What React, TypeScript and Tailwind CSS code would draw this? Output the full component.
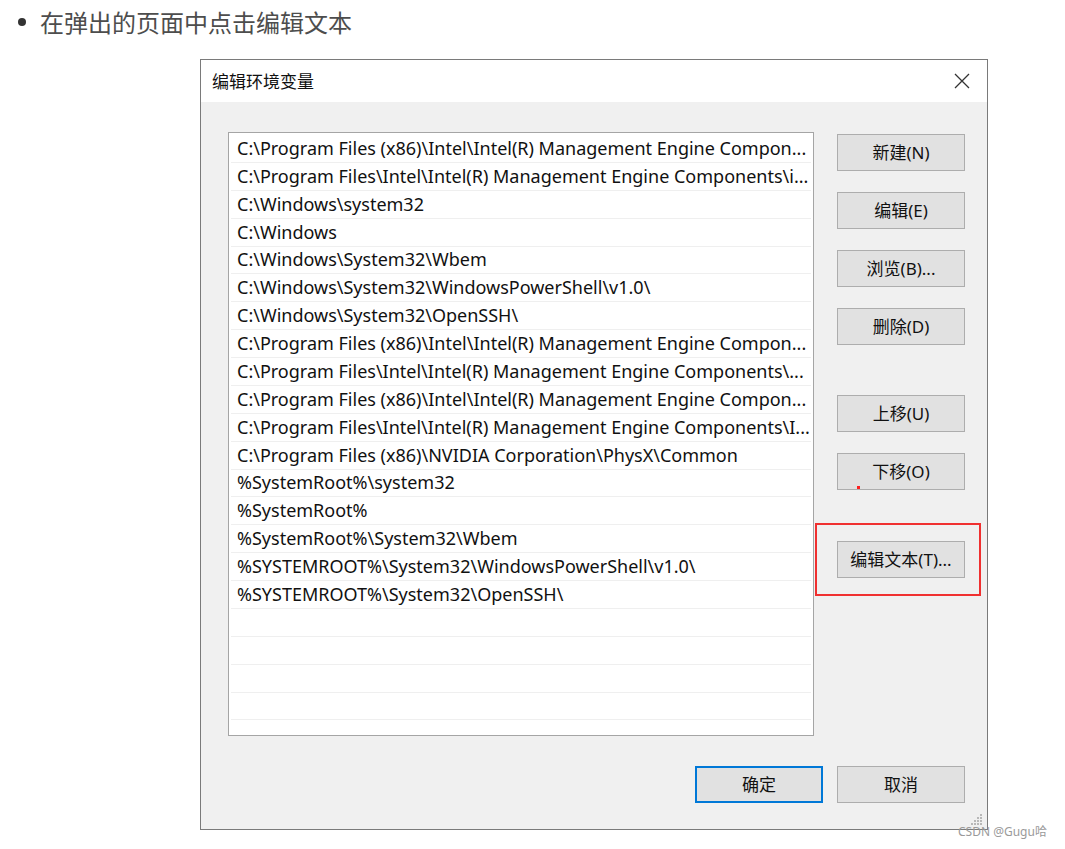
import React from "react";

const rows = [
  "C:\\Program Files (x86)\\Intel\\Intel(R) Management Engine Compon...",
  "C:\\Program Files\\Intel\\Intel(R) Management Engine Components\\i...",
  "C:\\Windows\\system32",
  "C:\\Windows",
  "C:\\Windows\\System32\\Wbem",
  "C:\\Windows\\System32\\WindowsPowerShell\\v1.0\\",
  "C:\\Windows\\System32\\OpenSSH\\",
  "C:\\Program Files (x86)\\Intel\\Intel(R) Management Engine Compon...",
  "C:\\Program Files\\Intel\\Intel(R) Management Engine Components\\...",
  "C:\\Program Files (x86)\\Intel\\Intel(R) Management Engine Compon...",
  "C:\\Program Files\\Intel\\Intel(R) Management Engine Components\\I...",
  "C:\\Program Files (x86)\\NVIDIA Corporation\\PhysX\\Common",
  "%SystemRoot%\\system32",
  "%SystemRoot%",
  "%SystemRoot%\\System32\\Wbem",
  "%SYSTEMROOT%\\System32\\WindowsPowerShell\\v1.0\\",
  "%SYSTEMROOT%\\System32\\OpenSSH\\",
  "",
  "",
  "",
  "",
  "",
  "",
];

function Btn({ label, primary }: { label: string; primary?: boolean }) {
  return (
    <div
      className={
        "w-[128px] h-[37px] flex items-center justify-center bg-[#e1e1e1] text-[17px] text-[#111] " +
        (primary ? "border-2 border-[#0078d7]" : "border border-[#adadad]")
      }
    >
      {label}
    </div>
  );
}

export default function App() {
  return (
    <div className="relative w-[1065px] h-[849px] bg-white overflow-hidden font-['Noto_Sans','Noto_Sans_CJK_SC',sans-serif]">
      {/* bullet line */}
      <div className="flex items-center h-[44px] pl-[18px]">
        <div className="w-[8px] h-[8px] rounded-full bg-[#333]" />
        <div className="ml-[14px] text-[24px] leading-[30px] text-[#4d4d4d] font-['Noto_Sans_CJK_SC',sans-serif]">
          在弹出的页面中点击编辑文本
        </div>
      </div>

      {/* dialog */}
      <div className="relative mt-[15px] ml-[200px] w-[788px] h-[771px] border border-[#7a7a7a] flex flex-col">
        <div className="h-[42px] bg-white flex items-center justify-between pl-[11px] pr-[17px]">
          <span className="text-[17px] text-[#111] font-['Noto_Sans_CJK_SC',sans-serif]">编辑环境变量</span>
          <svg width="16" height="16" viewBox="0 0 16 16">
            <path d="M1 1 L15 15 M15 1 L1 15" stroke="#333" strokeWidth="1.3" fill="none" />
          </svg>
        </div>

        <div className="flex-1 bg-[#f0f0f0] pt-[30px] pl-[27px] flex flex-col">
          <div className="flex">
            <div className="w-[586px] h-[604px] border border-[#a5a5a5] bg-white p-[2px] overflow-hidden">
              {rows.map((r, i) => (
                <div
                  key={i}
                  className="h-[27.875px] border-b border-[#efefef] pl-[6px] flex items-center text-[18px] text-[#111] whitespace-nowrap overflow-hidden"
                >
                  {r}
                </div>
              ))}
            </div>

            <div className="ml-[23px] pt-[2px] flex flex-col w-[128px]">
              <Btn label="新建(N)" />
              <div className="mt-[21px]">
                <Btn label="编辑(E)" />
              </div>
              <div className="mt-[21px]">
                <Btn label="浏览(B)..." />
              </div>
              <div className="mt-[21px]">
                <Btn label="删除(D)" />
              </div>
              <div className="mt-[50px]">
                <Btn label="上移(U)" />
              </div>
              <div className="mt-[21px] relative">
                <Btn label="下移(O)" />
                <div className="absolute left-[20px] top-[33px] w-[3px] h-[3px] bg-[#ff2020]" />
              </div>
              <div className="mt-[51px] relative">
                <Btn label="编辑文本(T)..." />
                <div className="absolute left-[-22px] top-[-18px] w-[166px] h-[73px] border-2 border-[#f03030]" />
              </div>
            </div>
          </div>

          <div className="mt-[30px] flex justify-end gap-[14px] pr-[22px]">
            <Btn label="确定" primary />
            <Btn label="取消" />
          </div>
        </div>

        {/* resize grip */}
        <svg className="absolute right-[4px] bottom-[3px]" width="12" height="12" viewBox="0 0 12 12">
          {[
            [9, 0],
            [6, 3],
            [9, 3],
            [3, 6],
            [6, 6],
            [9, 6],
            [0, 9],
            [3, 9],
            [6, 9],
            [9, 9],
          ].map(([x, y], i) => (
            <rect key={i} x={x} y={y} width="2" height="2" fill="#b8b8b8" />
          ))}
        </svg>
      </div>

      {/* watermark */}
      <div className="absolute left-[958px] top-[823px] text-[12px] leading-[18px] text-[#9a9a9a] whitespace-nowrap">
        CSDN @Gugu哈
      </div>
    </div>
  );
}
